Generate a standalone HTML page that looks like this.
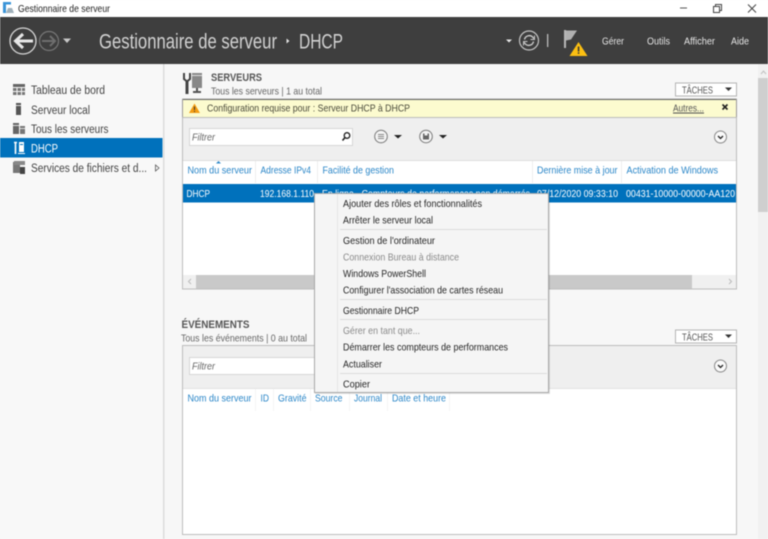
<!DOCTYPE html>
<html lang="fr">
<head>
<meta charset="utf-8">
<title>Gestionnaire de serveur</title>
<style>
html,body{margin:0;padding:0;width:768px;height:539px;overflow:hidden;background:#f7f7f7}
svg{display:block;filter:blur(.4px)}
text{font-family:"Liberation Sans",sans-serif;font-size:10px;white-space:pre}
.s{fill:#444;font-size:11.5px}
.h{fill:#2a86c8;font-size:10.5px}
.m{fill:#262626;font-size:10.5px}
.d{fill:#8a8a8a;font-size:10.5px}
.w{fill:#fff;font-size:10.5px}
.b{fill:#555;font-size:11px;font-weight:bold}
.g{fill:#666;font-size:10.5px}
.t{fill:#e4e4e4;font-size:10.5px}
</style>
</head>
<body>
<svg width="768" height="539" viewBox="0 0 768 539" xmlns="http://www.w3.org/2000/svg">
<rect width="768" height="539" fill="#f7f7f7"/>
<!-- title bar -->
<rect width="768" height="17" fill="#fff"/>
<rect x="3" y="2" width="3" height="11" fill="#3a94d8"/>
<rect x="3" y="2" width="8" height="2.500" fill="#3a94d8"/>
<path d="M6 13l2-5h4l2 5z" fill="#9fb0ba"/>
<text x="18" y="12" fill="#222" textLength="92" lengthAdjust="spacingAndGlyphs" style="font-size:10.5px">Gestionnaire de serveur</text>
<path d="M680 8h7" stroke="#555" stroke-width="1"/>
<path d="M713.500 6.500h6v6h-6zM715.500 6.500v-2h6v6h-2" fill="none" stroke="#444" stroke-width="1"/>
<path d="M748 4.500l8 8M756 4.500l-8 8" stroke="#444" stroke-width="1"/>
<!-- header -->
<rect y="17" width="768" height="47" fill="#3e3e3e"/>
<circle cx="23" cy="41" r="13" fill="none" stroke="#d6d6d6" stroke-width="1.300"/>
<path d="M33 41H16M23 34l-7.500 7 7.500 7" fill="none" stroke="#e6e6e6" stroke-width="3"/>
<circle cx="49" cy="41" r="9.500" fill="none" stroke="#777" stroke-width="1.200"/>
<path d="M42 41h13M50 36l5 5-5 5" fill="none" stroke="#6e6e6e" stroke-width="2"/>
<path d="M63 38.500h8l-4 4.500z" fill="#c8c8c8"/>
<text x="99" y="48.500" fill="#d2d2d2" textLength="178" lengthAdjust="spacingAndGlyphs" style="font-size:21px">Gestionnaire de serveur</text>
<path d="M286.500 38.500l3 2.500-3 2.500z" fill="#e0e0e0"/>
<text x="299" y="48.500" fill="#d2d2d2" textLength="44" lengthAdjust="spacingAndGlyphs" style="font-size:21px">DHCP</text>
<path d="M506 39.500h6l-3 3z" fill="#e8e8e8"/>
<circle cx="529" cy="40.500" r="9.500" fill="none" stroke="#c4c4c4" stroke-width="1.200"/>
<path d="M524.500 39.500a4.800 4.800 0 0 1 8.500-2l1 1M533.500 41.500a4.800 4.800 0 0 1-8.500 2l-1-1" fill="none" stroke="#c8c8c8" stroke-width="1.400"/>
<path d="M534.500 35.500v4h-4M523.500 45.500v-4h4" fill="none" stroke="#c8c8c8" stroke-width="1"/>
<rect x="547" y="34" width="1.300" height="13" fill="#bbb"/>
<rect x="564" y="30" width="2" height="18" fill="#b8b8b8"/>
<path d="M566 30.500h11l-6 9-5 1z" fill="#b0b0b0"/>
<path d="M578.500 42l9 14h-18z" fill="#fbbf12"/>
<rect x="577.800" y="46.500" width="1.500" height="5" fill="#333"/>
<rect x="577.800" y="52.300" width="1.500" height="1.500" fill="#333"/>
<text x="602" y="44.500" class="t" textLength="22" lengthAdjust="spacingAndGlyphs">Gérer</text>
<text x="647" y="44.500" class="t" textLength="23" lengthAdjust="spacingAndGlyphs">Outils</text>
<text x="684" y="44.500" class="t" textLength="31" lengthAdjust="spacingAndGlyphs">Afficher</text>
<text x="731" y="44.500" class="t" textLength="18" lengthAdjust="spacingAndGlyphs">Aide</text>
<!-- sidebar -->
<rect y="64" width="163" height="475" fill="#f8f8f8"/>
<rect x="163" y="64" width="1.500" height="475" fill="#dcdcdc"/>
<rect y="138" width="162.500" height="19.500" fill="#0071bc"/>
<rect x="13" y="84" width="12" height="3" fill="#666"/>
<path d="M13 88h3.500v3H13zM17.500 88H21v3h-3.500zM22 88h3v3h-3zM13 92h3.500v3H13zM17.500 92H21v3h-3.500zM22 92h3v3h-3z" fill="#777"/>
<rect x="16" y="103" width="5" height="12" fill="#555"/>
<rect x="16" y="105" width="5" height="1" fill="#ddd"/>
<rect x="13" y="123" width="6" height="11" fill="#666"/>
<rect x="20" y="126" width="5" height="8" fill="#777"/>
<rect x="13" y="125" width="6" height="1" fill="#ddd"/>
<rect x="20" y="128" width="5" height="1" fill="#ddd"/>
<rect x="19" y="142" width="5" height="10" fill="#fff"/>
<rect x="20" y="144" width="3" height="1" fill="#0071bc"/>
<path d="M18 153.500h7" stroke="#fff"/>
<path d="M14 142.500h3M15.500 143v11" stroke="#fff" stroke-width="1.600"/>
<rect x="13" y="162" width="7" height="11" fill="#777"/>
<rect x="14" y="161" width="11" height="4" fill="#888"/>
<rect x="20" y="167" width="5" height="7" fill="#444"/>
<text x="31" y="94" class="s" textLength="74" lengthAdjust="spacingAndGlyphs">Tableau de bord</text>
<text x="31" y="114" class="s" textLength="59" lengthAdjust="spacingAndGlyphs">Serveur local</text>
<text x="31" y="133" class="s" textLength="77.500" lengthAdjust="spacingAndGlyphs">Tous les serveurs</text>
<text x="31" y="152.500" fill="#fff" textLength="27" lengthAdjust="spacingAndGlyphs" style="font-size:11.5px">DHCP</text>
<text x="31" y="172" class="s" textLength="116" lengthAdjust="spacingAndGlyphs">Services de fichiers et d...</text>
<path d="M155.500 165v6l3.500-3z" fill="#fff" stroke="#555" stroke-width=".8"/>
<!-- scrollbar -->
<rect x="758" y="64" width="10" height="475" fill="#f1f1f1"/>
<rect x="758" y="78" width="10" height="134" fill="#cfcfcf"/>
<path d="M761 74l2.500-3 2.500 3" fill="none" stroke="#c0c0c0"/>
<!-- servers heading -->
<path d="M184 73v6l3 2.500 3-2.500v-6" fill="none" stroke="#444" stroke-width="2"/>
<rect x="185.500" y="81" width="3" height="13" fill="#444"/>
<rect x="192" y="73" width="10" height="15" fill="#888"/>
<rect x="192" y="75" width="10" height="1" fill="#ddd"/>
<rect x="196" y="88" width="2" height="3" fill="#555"/>
<rect x="193" y="91" width="8" height="2" fill="#555"/>
<text x="211" y="81" class="b" textLength="51" lengthAdjust="spacingAndGlyphs">SERVEURS</text>
<text x="211" y="94.500" class="g" textLength="111" lengthAdjust="spacingAndGlyphs">Tous les serveurs | 1 au total</text>
<rect x="675.500" y="83" width="61" height="13" fill="#fff" stroke="#b5b5b5"/>
<text x="682" y="93.500" fill="#555" textLength="31" lengthAdjust="spacingAndGlyphs" style="font-size:10.5px">TÂCHES</text>
<path d="M725 87.500h7l-3.500 3.500z" fill="#333"/>
<!-- servers panel -->
<rect x="182.500" y="99" width="554" height="190" fill="#fff" stroke="#bdbdbd"/>
<rect x="183" y="117" width="553" height="43" fill="#efefef"/>
<rect x="182" y="99" width="555" height="18.500" fill="#fcfbcf"/>
<path d="M182 99.500h555" stroke="#666" stroke-width="1"/>
<path d="M182.500 99v18M736.500 99v18" stroke="#999"/>
<path d="M182 117.500h555" stroke="#bbb"/>
<path d="M194.500 103.500l5.500 9.500h-11z" fill="#f39c12"/>
<rect x="194" y="106.500" width="1" height="3.500" fill="#333"/>
<rect x="194" y="111" width="1" height="1" fill="#333"/>
<text x="207" y="111.500" fill="#4a4a3a" textLength="203" lengthAdjust="spacingAndGlyphs" style="font-size:10.5px">Configuration requise pour : Serveur DHCP à DHCP</text>
<text x="673" y="111.500" fill="#555" text-decoration="underline" textLength="31" lengthAdjust="spacingAndGlyphs" style="font-size:10.5px">Autres...</text>
<path d="M722.500 104.500l5 5M727.500 104.500l-5 5" stroke="#222" stroke-width="1.600"/>
<rect x="189.500" y="128.500" width="163" height="17" fill="#fff" stroke="#d6d6d6"/>
<text x="192" y="140.500" fill="#666" font-style="italic" textLength="23" lengthAdjust="spacingAndGlyphs" style="font-size:10.5px">Filtrer</text>
<circle cx="347" cy="135.500" r="2.800" fill="none" stroke="#222" stroke-width="1.300"/>
<path d="M345 137.500l-2.500 3" stroke="#222" stroke-width="1.600"/>
<circle cx="381" cy="136.500" r="6.300" fill="#f4f4f4" stroke="#777"/>
<path d="M378 134.500h6M378 136.500h6M378 138.500h6" stroke="#888"/>
<path d="M394 135h8l-4 3.500z" fill="#222"/>
<circle cx="426" cy="136.500" r="6.300" fill="#f4f4f4" stroke="#777"/>
<rect x="423" y="133.500" width="6" height="6" fill="#666"/>
<rect x="424.500" y="133.500" width="3" height="2" fill="#eee"/>
<path d="M439 135h8l-4 3.500z" fill="#222"/>
<circle cx="720.500" cy="137" r="6" fill="#fafafa" stroke="#888"/>
<path d="M718 136l2.500 2.500 2.500-2.500" fill="none" stroke="#222" stroke-width="1.300"/>
<!-- server table -->
<rect x="183" y="160" width="553" height="1" fill="#dedede"/>
<path d="M255.500 161v22M317.500 161v22M532.500 161v22M621.500 161v22" stroke="#eeeeee"/>
<path d="M216 163.500h5l-2.500-2.500z" fill="#2a86c8"/>
<text x="187.500" y="173.500" class="h" textLength="64.500" lengthAdjust="spacingAndGlyphs">Nom du serveur</text>
<text x="260.500" y="173.500" class="h" textLength="50.500" lengthAdjust="spacingAndGlyphs">Adresse IPv4</text>
<text x="322.500" y="173.500" class="h" textLength="71.500" lengthAdjust="spacingAndGlyphs">Facilité de gestion</text>
<text x="537" y="173.500" class="h" textLength="80.500" lengthAdjust="spacingAndGlyphs">Dernière mise à jour</text>
<text x="626.500" y="173.500" class="h" textLength="91.500" lengthAdjust="spacingAndGlyphs">Activation de Windows</text>
<rect x="183" y="184" width="553" height="18.500" fill="#0071bc"/>
<text x="186.500" y="197" class="w" textLength="23.500" lengthAdjust="spacingAndGlyphs">DHCP</text>
<text x="260" y="197" class="w" textLength="54" lengthAdjust="spacingAndGlyphs">192.168.1.110</text>
<text x="322" y="197" class="w" textLength="208" lengthAdjust="spacingAndGlyphs">En ligne - Compteurs de performances non démarrés</text>
<text x="537" y="197" class="w" textLength="81" lengthAdjust="spacingAndGlyphs">07/12/2020 09:33:10</text>
<text x="626" y="197" class="w" textLength="109" lengthAdjust="spacingAndGlyphs">00431-10000-00000-AA120</text>
<rect x="183" y="275" width="553" height="13.500" fill="#f0f0f0"/>
<rect x="196" y="275" width="496" height="13.500" fill="#c9c9c9"/>
<path d="M191 279l-2.500 2.500 2.500 2.500M729 279l2.500 2.500-2.500 2.500" fill="none" stroke="#bbb"/>
<!-- events -->
<text x="181.500" y="328" class="b" textLength="68" lengthAdjust="spacingAndGlyphs">ÉVÉNEMENTS</text>
<text x="181" y="341.500" class="g" textLength="126" lengthAdjust="spacingAndGlyphs">Tous les événements | 0 au total</text>
<rect x="675.500" y="330" width="61" height="13" fill="#fff" stroke="#b5b5b5"/>
<text x="682" y="340.500" fill="#555" textLength="31" lengthAdjust="spacingAndGlyphs" style="font-size:10.5px">TÂCHES</text>
<path d="M725 334.500h7l-3.500 3.500z" fill="#333"/>
<rect x="182.500" y="345.500" width="554" height="189" fill="#fff" stroke="#bdbdbd"/>
<rect x="183" y="346" width="553" height="42" fill="#efefef"/>
<rect x="183" y="388" width="553" height="1" fill="#e2e2e2"/>
<rect x="189.500" y="357.500" width="163" height="17" fill="#fff" stroke="#d6d6d6"/>
<text x="192" y="369.500" fill="#666" font-style="italic" textLength="23" lengthAdjust="spacingAndGlyphs" style="font-size:10.5px">Filtrer</text>
<circle cx="720.500" cy="366" r="6" fill="#fafafa" stroke="#888"/>
<path d="M718 365l2.500 2.500 2.500-2.500" fill="none" stroke="#222" stroke-width="1.300"/>
<text x="187.500" y="401.500" class="h" textLength="64" lengthAdjust="spacingAndGlyphs">Nom du serveur</text>
<text x="260.500" y="401.500" class="h" textLength="8.500" lengthAdjust="spacingAndGlyphs">ID</text>
<text x="278" y="401.500" class="h" textLength="28.500" lengthAdjust="spacingAndGlyphs">Gravité</text>
<text x="315" y="401.500" class="h" textLength="27.500" lengthAdjust="spacingAndGlyphs">Source</text>
<text x="354" y="401.500" class="h" textLength="28" lengthAdjust="spacingAndGlyphs">Journal</text>
<text x="392" y="401.500" class="h" textLength="54" lengthAdjust="spacingAndGlyphs">Date et heure</text>
<path d="M255.500 389v22M273.500 389v22M310.500 389v22M349.500 389v22M387.500 389v22M449.500 389v22" stroke="#f5f5f5"/>
<!-- context menu -->
<rect x="315" y="194" width="235" height="200" fill="#000" opacity=".12"/>
<rect x="314.500" y="193.500" width="234" height="199" fill="#f5f5f5" stroke="#a8a8a8"/>
<path d="M337.500 194v198" stroke="#e6e6e6"/>
<path d="M340 229.500h207M340 299.500h207M340 319.500h207M340 373.500h207" stroke="#dcdcdc"/>
<text x="343" y="207" class="m" textLength="139" lengthAdjust="spacingAndGlyphs">Ajouter des rôles et fonctionnalités</text>
<text x="343" y="223.500" class="m" textLength="90" lengthAdjust="spacingAndGlyphs">Arrêter le serveur local</text>
<text x="343" y="244" class="m" textLength="92" lengthAdjust="spacingAndGlyphs">Gestion de l'ordinateur</text>
<text x="343" y="260.500" class="d" textLength="116" lengthAdjust="spacingAndGlyphs">Connexion Bureau à distance</text>
<text x="343" y="277" class="m" textLength="83" lengthAdjust="spacingAndGlyphs">Windows PowerShell</text>
<text x="343" y="293.500" class="m" textLength="160" lengthAdjust="spacingAndGlyphs">Configurer l'association de cartes réseau</text>
<text x="343" y="314" class="m" textLength="76" lengthAdjust="spacingAndGlyphs">Gestionnaire DHCP</text>
<text x="343" y="334" class="d" textLength="77" lengthAdjust="spacingAndGlyphs">Gérer en tant que...</text>
<text x="343" y="350.500" class="m" textLength="165" lengthAdjust="spacingAndGlyphs">Démarrer les compteurs de performances</text>
<text x="343" y="367.500" class="m" textLength="39" lengthAdjust="spacingAndGlyphs">Actualiser</text>
<text x="343" y="387.500" class="m" textLength="27" lengthAdjust="spacingAndGlyphs">Copier</text>
</svg>
</body>
</html>
